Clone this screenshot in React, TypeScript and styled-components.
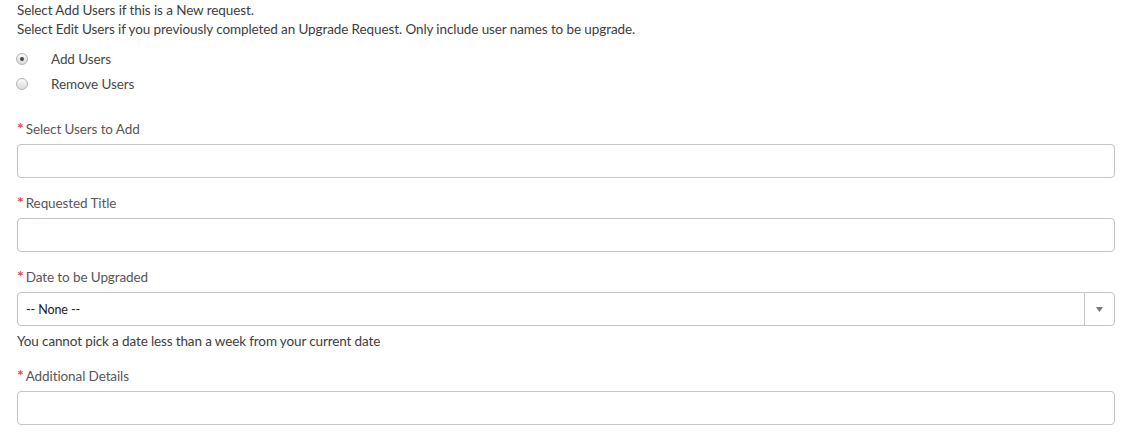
import React, { FC } from 'react';
import styled, { createGlobalStyle } from 'styled-components';

const GlobalStyle = createGlobalStyle`
	html, body {
		margin: 0;
		padding: 0;
		background: #ffffff;
	}
	body {
		font-family: Lato, 'Liberation Sans', sans-serif;
		font-size: 13.5px;
		letter-spacing: -0.1px;
		color: #333333;
	}
`;

const Page = styled.div`
	width: 1098px;
	padding: 0 15px 0 17px;
`;

const Intro = styled.div`
	line-height: 19px;
	color: #3d3d3d;
	padding-top: 1px;
`;

const RadioList = styled.div`
	display: flex;
	flex-direction: column;
	gap: 6px;
	margin: 10px 0 26px;
`;

const RadioRow = styled.label`
	display: flex;
	align-items: center;
	height: 19px;
	color: #474747;
`;

const RadioDot = styled.span<{ checked?: boolean }>`
	position: relative;
	width: 12px;
	height: 12px;
	margin-left: -1px;
	margin-right: 23px;
	border-radius: 50%;
	border: 1px solid #b3b3b3;
	background: linear-gradient(#fafafa, #dadada);
	box-sizing: border-box;
	flex-shrink: 0;

	&::after {
		content: '';
		display: ${({ checked }) => (checked ? 'block' : 'none')};
		position: absolute;
		left: 3px;
		top: 3px;
		width: 4px;
		height: 4px;
		border-radius: 50%;
		background: #474747;
	}
`;

const Group = styled.div`
	margin-bottom: 15px;
`;

const Label = styled.div`
	display: flex;
	align-items: flex-start;
	line-height: 20px;
	margin-bottom: 5px;
	color: #575757;
`;

const Required = styled.span`
	position: relative;
	top: -1px;
	color: #e0474c;
	font-weight: 700;
	margin-right: 2px;
	font-size: 16px;
	line-height: 20px;
`;

const Input = styled.div`
	height: 34px;
	box-sizing: border-box;
	border: 1px solid #c4c4c4;
	border-radius: 4px;
	background: #fff;
`;

const Select = styled.div`
	display: flex;
	height: 34px;
	box-sizing: border-box;
	border: 1px solid #c4c4c4;
	border-radius: 4px;
	background: #fff;
	font-size: 12.5px;
	color: #222222;
`;

const SelectValue = styled.div`
	flex: 1;
	display: flex;
	align-items: center;
	padding-left: 8px;
`;

const SelectArrow = styled.div`
	width: 29px;
	display: flex;
	align-items: center;
	justify-content: center;
	border-left: 1px solid #c4c4c4;
`;

const Help = styled.div`
	line-height: 19px;
	margin-top: 6px;
	color: #3d3d3d;
	letter-spacing: -0.13px;
`;

interface IField {
	label: string;
	children?: React.ReactNode;
}

const Field: FC<IField> = ({ label, children }) => (
	<Group>
		<Label>
			<Required>*</Required>
			{label}
		</Label>
		{children ?? <Input />}
	</Group>
);

const App: FC = () => (
	<>
		<GlobalStyle />
		<Page>
			<Intro>
				<div>Select Add Users if this is a New request.</div>
				<div>
					Select Edit Users if you previously completed an Upgrade Request. Only include user names to be
					upgrade.
				</div>
			</Intro>
			<RadioList>
				<RadioRow>
					<RadioDot checked />
					Add Users
				</RadioRow>
				<RadioRow>
					<RadioDot />
					Remove Users
				</RadioRow>
			</RadioList>
			<Field label="Select Users to Add" />
			<Field label="Requested Title" />
			<Field label="Date to be Upgraded">
				<Select>
					<SelectValue>-- None --</SelectValue>
					<SelectArrow>
						<svg width="7" height="5" viewBox="0 0 7 5">
							<path d="M0 0 H7 L3.5 5 Z" fill="#777" />
						</svg>
					</SelectArrow>
				</Select>
				<Help>You cannot pick a date less than a week from your current date</Help>
			</Field>
			<Field label="Additional Details" />
		</Page>
	</>
);

export default App;
